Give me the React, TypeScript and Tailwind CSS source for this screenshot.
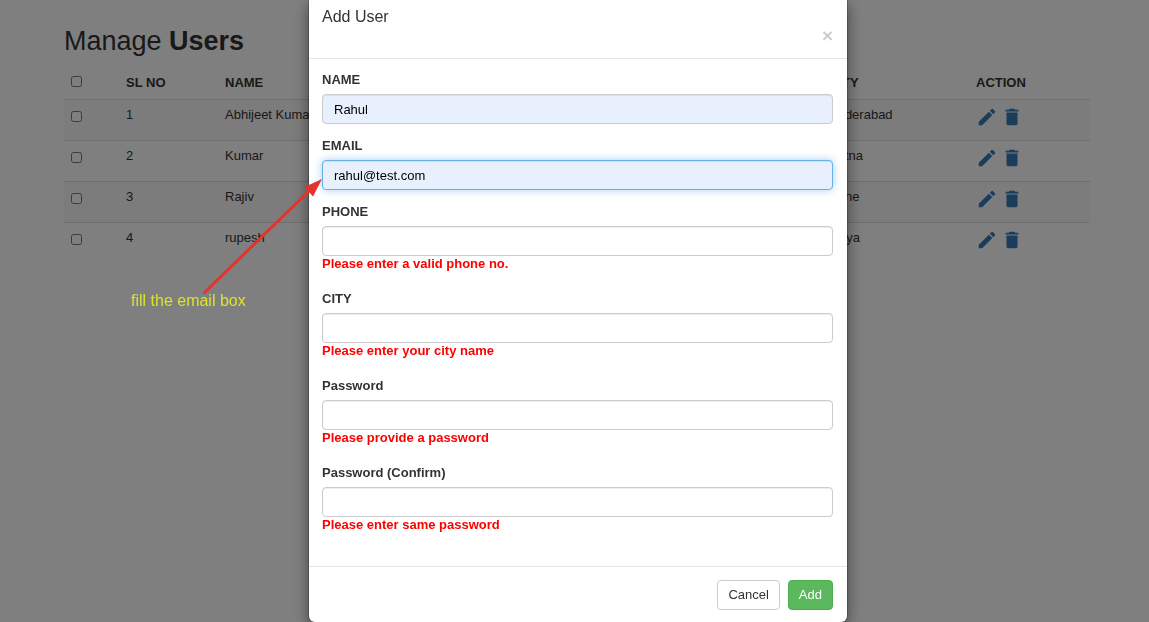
import { useState } from "react";
import { MdDelete, MdEdit } from "react-icons/md";

type User = {
  id: number;
  name: string;
  email: string;
  phone: string;
  city: string;
};

type Field = {
  id: string;
  label: string;
  type: string;
  value: string;
  error?: string;
  active?: boolean;
};

const users: User[] = [
  { id: 1, name: "Abhijeet Kumar", email: "", phone: "", city: "Hyderabad" },
  { id: 2, name: "Kumar", email: "", phone: "", city: "Patna" },
  { id: 3, name: "Rajiv", email: "", phone: "", city: "Pune" },
  { id: 4, name: "rupesh", email: "", phone: "", city: "Gaya" },
];

const fields: Field[] = [
  { id: "name", label: "NAME", type: "text", value: "Rahul" },
  { id: "email", label: "EMAIL", type: "text", value: "rahul@test.com", active: true },
  { id: "phone", label: "PHONE", type: "text", value: "", error: "Please enter a valid phone no." },
  { id: "city", label: "CITY", type: "text", value: "", error: "Please enter your city name" },
  { id: "password", label: "Password", type: "password", value: "", error: "Please provide a password" },
  { id: "confirm", label: "Password (Confirm)", type: "password", value: "", error: "Please enter same password" },
];

const UserRow = ({ user }: { user: User }) => {
  const cell = "h-[41px] border-t border-[#ddd] px-[7px] py-1.5";

  return (
    <tr className="align-top odd:bg-[#f9f9f9]">
      <td className={cell}>
        <input
          type="checkbox"
          aria-label={`Select ${user.name}`}
          className="mt-[5px] block size-[11px]"
        />
      </td>
      <td className={cell}>{user.id}</td>
      <td className={cell}>{user.name}</td>
      <td className={cell}>{user.email}</td>
      <td className={cell}>{user.phone}</td>
      <td className={cell}>{user.city}</td>
      <td className={cell}>
        <div className="flex gap-[3px] text-[#337ab7]">
          <button aria-label={`Edit ${user.name}`}>
            <MdEdit size={22} />
          </button>
          <button aria-label={`Delete ${user.name}`}>
            <MdDelete size={22} />
          </button>
        </div>
      </td>
    </tr>
  );
};

const UsersTable = () => (
  <table className="w-full table-fixed border-separate border-spacing-0">
    <colgroup>
      <col className="w-[55px]" />
      <col className="w-[99px]" />
      <col className="w-[182px]" />
      <col />
      <col className="w-[183px]" />
      <col className="w-[147px]" />
      <col className="w-[121px]" />
    </colgroup>
    <thead>
      <tr className="text-left align-top">
        <th className="px-[7px] pt-2 pb-[7px]">
          <input
            type="checkbox"
            aria-label="Select all"
            className="mt-0.5 block size-[11px]"
          />
        </th>
        <th className="px-[7px] pt-2 pb-[7px]">SL NO</th>
        <th className="px-[7px] pt-2 pb-[7px]">NAME</th>
        <th className="px-[7px] pt-2 pb-[7px]">EMAIL</th>
        <th className="px-[7px] pt-2 pb-[7px]">PHONE</th>
        <th className="px-[7px] pt-2 pb-[7px]">CITY</th>
        <th className="px-[7px] pt-2 pb-[7px]">ACTION</th>
      </tr>
    </thead>
    <tbody>
      {users.map((user) => (
        <UserRow key={user.id} user={user} />
      ))}
    </tbody>
  </table>
);

const FormField = ({ field }: { field: Field }) => {
  const [value, setValue] = useState(field.value);

  const border = field.active
    ? "border-[#66afe9] shadow-[inset_0_1px_1px_rgba(0,0,0,0.075),0_0_8px_rgba(102,175,233,0.6)]"
    : "border-[#ccc] shadow-[inset_0_1px_1px_rgba(0,0,0,0.075)]";

  return (
    <div className={field.error ? "mb-[18px]" : "mb-[13px]"}>
      <label htmlFor={field.id} className="mb-[5px] block font-bold">
        {field.label}
      </label>
      <input
        id={field.id}
        type={field.type}
        value={value}
        onChange={(e) => setValue(e.target.value)}
        className={`block h-[30px] w-full rounded border px-[11px] text-black outline-none ${border} ${
          value ? "bg-[#e8f0fe]" : "bg-white"
        }`}
      />
      {field.error && (
        <p className="leading-4 font-bold text-[#ff0000]">{field.error}</p>
      )}
    </div>
  );
};

const AddUserModal = () => (
  <div className="fixed inset-0 flex items-start justify-center overflow-hidden bg-black/50 pl-[7px]">
    <div
      role="dialog"
      aria-labelledby="modal-title"
      className="w-full max-w-[538px] rounded-b-md bg-white shadow-[0_0_0_1px_rgba(0,0,0,0.2),0_5px_15px_rgba(0,0,0,0.5)]"
    >
      <div className="border-b border-[#e5e5e5] pt-2 pr-3.5 pb-3 pl-[13px]">
        <h4 id="modal-title" className="text-base leading-[18px]">
          Add User
        </h4>
        <div className="flex justify-end">
          <button
            aria-label="Close"
            className="text-[19px] leading-5 font-bold text-black opacity-20"
          >
            ×
          </button>
        </div>
      </div>
      <div className="pt-3 pr-3.5 pb-[15px] pl-[13px]">
        {fields.map((field) => (
          <FormField key={field.id} field={field} />
        ))}
      </div>
      <div className="flex justify-end gap-2 border-t border-[#e5e5e5] pt-[13px] pr-3.5 pb-3 pl-[13px]">
        <button className="h-[30px] rounded border border-[#ccc] bg-white px-2.5">
          Cancel
        </button>
        <button className="h-[30px] rounded border border-[#4cae4c] bg-[#5cb85c] px-2.5 text-white">
          Add
        </button>
      </div>
    </div>
  </div>
);

// callout drawn over the dialog, pointing at the email box
const Callout = () => (
  <div className="pointer-events-none absolute top-0 left-0">
    <svg width="340" height="310" viewBox="0 0 340 310">
      <path d="M204.5 292.5 309 191" stroke="#e8302c" strokeWidth="3" strokeLinecap="round" />
      <path d="M322 179 304.5 187 308.5 191.5 313 196.5Z" fill="#e8302c" />
    </svg>
    <p className="absolute top-[291px] left-[131px] text-base leading-5 whitespace-nowrap text-[#dce22e]">
      fill the email box
    </p>
  </div>
);

export default function App() {
  return (
    <div className="relative min-h-screen bg-white font-['Liberation_Sans',Arial,sans-serif] text-[13px] leading-[18px] text-[#333]">
      <main className="pt-[26px] pr-[59px] pl-16">
        <h2 className="mb-2.5 text-[27px] leading-[30px]">
          Manage <b>Users</b>
        </h2>
        <UsersTable />
      </main>
      <AddUserModal />
      <Callout />
    </div>
  );
}
